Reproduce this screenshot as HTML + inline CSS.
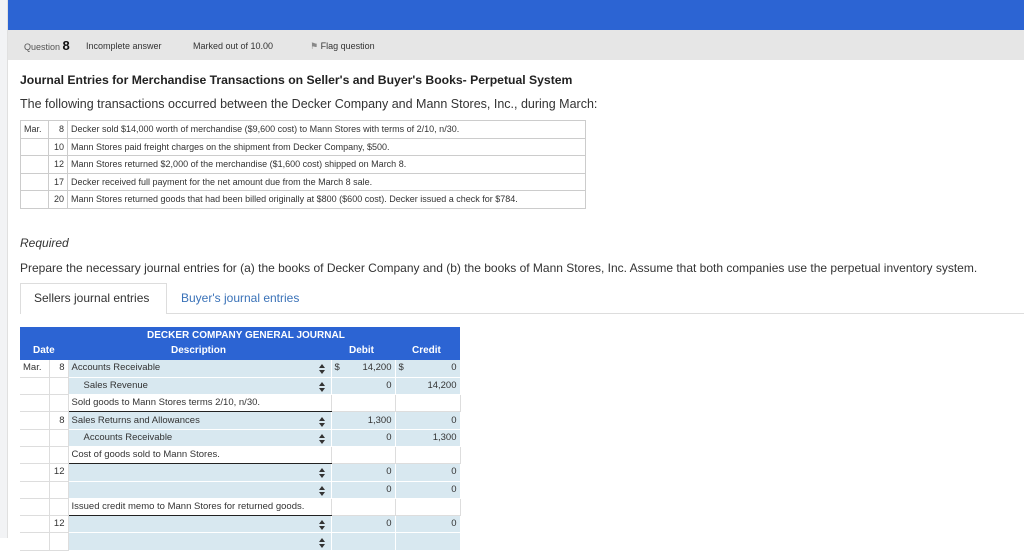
<!DOCTYPE html>
<html><head><style>
*{margin:0;padding:0;box-sizing:border-box}
body{width:1024px;height:538px;overflow:hidden;background:#fff;font-family:"Liberation Sans","DejaVu Sans",sans-serif;color:#333;position:relative}
.a{position:absolute;white-space:nowrap}
.s{font-size:9.5px}
table{border-collapse:collapse;position:absolute;table-layout:fixed}
.tx td{border:1px solid #ccc;font-size:9px;height:17.5px;padding:0 3px;color:#333}
.j tr{height:17.3px}
.j td{font-size:9.5px;padding:0 3px;border-right:1px solid #fff;border-bottom:1px solid #fff;color:#333;line-height:12px;overflow:hidden;white-space:nowrap}
.j .b{background:#d8e8f0}
.j .w{background:#fff;border-right:1px solid #ddd;border-bottom:1px solid #ddd}
.r{text-align:right}
.ar{float:right;margin-top:2px;margin-right:3px}
</style></head><body>
<svg width="0" height="0" style="position:absolute"><defs><g id="ud"><path d="M0 4L3 0L6 4Z M0 6L3 10L6 6Z" fill="#333"/></g></defs></svg>
<div class="a" style="left:0;top:0;width:8px;height:538px;background:#f2f3f5;border-right:1px solid #e0e0e0"></div>
<div class="a" style="left:8px;top:0;width:1016px;height:30px;background:#2c64d3"></div>
<div class="a" style="left:8px;top:30px;width:1016px;height:30px;background:#e6e6e6"></div>
<div class="a s" style="left:24px;top:38px;font-size:9px;color:#555">Question <b style="font-size:13px;color:#111">8</b></div>
<div class="a s" style="left:86px;top:41px;font-size:9px">Incomplete answer</div>
<div class="a s" style="left:193px;top:41px;font-size:9px">Marked out of 10.00</div>
<div class="a s" style="left:310px;top:41px;font-size:9px"><span style="color:#888">&#9873;</span> Flag question</div>
<div class="a" style="left:20px;top:73px;font-size:12.2px;font-weight:bold;color:#222">Journal Entries for Merchandise Transactions on Seller's and Buyer's Books- Perpetual System</div>
<div class="a" style="left:20px;top:97px;font-size:12.5px">The following transactions occurred between the Decker Company and Mann Stores, Inc., during March:</div>
<table class="tx" style="left:20px;top:120px;width:566px">
<tr><td style="width:28px">Mar.</td><td class="r" style="width:19px">8</td><td>Decker sold $14,000 worth of merchandise ($9,600 cost) to Mann Stores with terms of 2/10, n/30.</td></tr>
<tr><td></td><td class="r">10</td><td>Mann Stores paid freight charges on the shipment from Decker Company, $500.</td></tr>
<tr><td></td><td class="r">12</td><td>Mann Stores returned $2,000 of the merchandise ($1,600 cost) shipped on March 8.</td></tr>
<tr><td></td><td class="r">17</td><td>Decker received full payment for the net amount due from the March 8 sale.</td></tr>
<tr><td></td><td class="r">20</td><td>Mann Stores returned goods that had been billed originally at $800 ($600 cost). Decker issued a check for $784.</td></tr>
</table>
<div class="a" style="left:20px;top:236px;font-size:12px;font-style:italic">Required</div>
<div class="a" style="left:20px;top:261px;font-size:12px">Prepare the necessary journal entries for (a) the books of Decker Company and (b) the books of Mann Stores, Inc. Assume that both companies use the perpetual inventory system.</div>
<div class="a" style="left:166px;top:313px;width:858px;height:1px;background:#ddd"></div>
<div class="a" style="left:20px;top:283px;width:147px;height:31px;border:1px solid #ddd;border-bottom:none;background:#fff"></div>
<div class="a" style="left:34px;top:291px;font-size:12px">Sellers journal entries</div>
<div class="a" style="left:181px;top:291px;font-size:12px;color:#3a72b8">Buyer's journal entries</div>
<div class="a" style="left:20px;top:327px;width:440px;height:33px;background:#2c64d3;color:#fff;font-size:10px;font-weight:bold">
<div class="a" style="left:127px;top:3px">DECKER COMPANY GENERAL JOURNAL</div>
<div class="a" style="left:13px;top:18px">Date</div>
<div class="a" style="left:151px;top:18px">Description</div>
<div class="a" style="left:329px;top:18px">Debit</div>
<div class="a" style="left:392px;top:18px">Credit</div>
</div>
<table class="j" style="left:20px;top:360px;width:440px">
<colgroup><col style="width:29px"><col style="width:19px"><col style="width:263px"><col style="width:64px"><col style="width:65px"></colgroup>
<tr><td class="w">Mar.</td><td class="w r">8</td><td class="b">Accounts Receivable<svg class="ar" width="6" height="10"><use href="#ud"/></svg></td><td class="b">$<span style="float:right">14,200</span></td><td class="b">$<span style="float:right">0</span></td></tr>
<tr><td class="w"></td><td class="w"></td><td class="b" style="padding-left:15px">Sales Revenue<svg class="ar" width="6" height="10"><use href="#ud"/></svg></td><td class="b r">0</td><td class="b r">14,200</td></tr>
<tr><td class="w"></td><td class="w"></td><td class="w" style="border-bottom:1.5px solid #222">Sold goods to Mann Stores terms 2/10, n/30.</td><td class="w"></td><td class="w"></td></tr>
<tr><td class="w"></td><td class="w r">8</td><td class="b">Sales Returns and Allowances<svg class="ar" width="6" height="10"><use href="#ud"/></svg></td><td class="b r">1,300</td><td class="b r">0</td></tr>
<tr><td class="w"></td><td class="w"></td><td class="b" style="padding-left:15px">Accounts Receivable<svg class="ar" width="6" height="10"><use href="#ud"/></svg></td><td class="b r">0</td><td class="b r">1,300</td></tr>
<tr><td class="w"></td><td class="w"></td><td class="w" style="border-bottom:1.5px solid #222">Cost of goods sold to Mann Stores.</td><td class="w"></td><td class="w"></td></tr>
<tr><td class="w"></td><td class="w r">12</td><td class="b"><svg class="ar" width="6" height="10"><use href="#ud"/></svg></td><td class="b r">0</td><td class="b r">0</td></tr>
<tr><td class="w"></td><td class="w"></td><td class="b"><svg class="ar" width="6" height="10"><use href="#ud"/></svg></td><td class="b r">0</td><td class="b r">0</td></tr>
<tr><td class="w"></td><td class="w"></td><td class="w" style="border-bottom:1.5px solid #222">Issued credit memo to Mann Stores for returned goods.</td><td class="w"></td><td class="w"></td></tr>
<tr><td class="w"></td><td class="w r">12</td><td class="b"><svg class="ar" width="6" height="10"><use href="#ud"/></svg></td><td class="b r">0</td><td class="b r">0</td></tr>
<tr><td class="w"></td><td class="w"></td><td class="b"><svg class="ar" width="6" height="10"><use href="#ud"/></svg></td><td class="b"></td><td class="b"></td></tr>
</table>
</body></html>
